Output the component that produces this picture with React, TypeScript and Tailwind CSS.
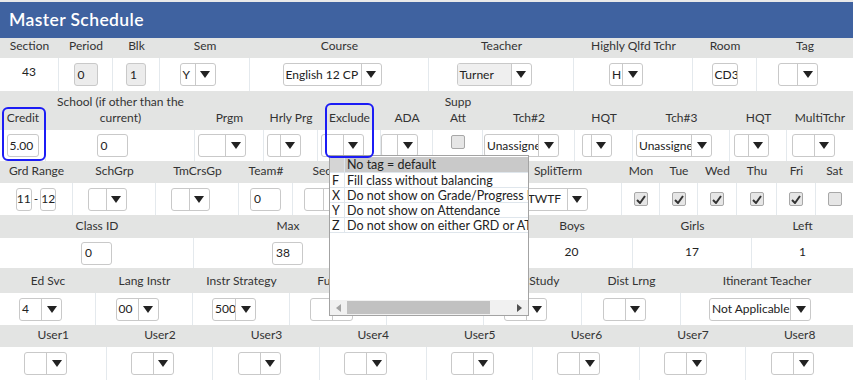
import React from "react";

const font = { fontFamily: "Lato, 'Liberation Sans', sans-serif" };

function Arrow() {
  return (
    <svg width="10" height="7" viewBox="0 0 10 7">
      <polygon points="0,0 10,0 5,7" fill="#222" />
    </svg>
  );
}

function Sel({ w, v = "", gray = false }: { w: string; v?: string; gray?: boolean }) {
  return (
    <div className={`${w} mr-[14px] flex h-[23px] overflow-hidden rounded-[3px] border border-[#c9c9c9] bg-white`}>
      <div className={`flex min-w-0 flex-1 items-center overflow-hidden whitespace-nowrap pl-[2px] text-[12px] text-[#222] ${gray ? "bg-[#efefef]" : ""}`}>
        {v}
      </div>
      <div className="flex w-[20px] shrink-0 items-center justify-center border-l border-[#c9c9c9]">
        <Arrow />
      </div>
    </div>
  );
}

function Inp({ w, v, gray = false, pad = "px-[3px]" }: { w: string; v: string; gray?: boolean; pad?: string }) {
  return (
    <div className={`${w} ${pad} flex h-[23px] items-center overflow-hidden whitespace-nowrap rounded-[3px] border border-[#c9c9c9] text-[12px] text-[#222] ${gray ? "bg-[#ececec]" : "bg-white"}`}>
      {v}
    </div>
  );
}

function Check({ on = false }: { on?: boolean }) {
  return (
    <div className="flex h-[14px] w-[14px] items-center justify-center rounded-[2px] border border-[#a8a8a8] bg-[#e6e6e6]">
      {on && (
        <svg width="10" height="9" viewBox="0 0 10 9">
          <path d="M1 5 L4 8 L9 1" stroke="#333" strokeWidth="2" fill="none" />
        </svg>
      )}
    </div>
  );
}

type Cell = { label: React.ReactNode; value?: React.ReactNode; top?: boolean };

function Band({ grid, head, body, cells }: { grid: string; head: string; body: string; cells: Cell[] }) {
  return (
    <>
      <div className={`grid ${grid} ${head} bg-[#e3e4e3]`}>
        {cells.map((c, i) => (
          <div key={i} className="flex items-end justify-center whitespace-nowrap pb-[4px] text-center text-[12px] leading-[16px] text-[#333]">
            {c.label}
          </div>
        ))}
      </div>
      <div className={`grid ${grid} ${body} bg-white`}>
        {cells.map((c, i) => (
          <div
            key={i}
            className={`flex justify-center border-r border-[#e4e9ed] text-[12px] text-[#222] last:border-r-0 ${c.top ? "items-start pt-[5px]" : "items-center"}`}
          >
            {c.value}
          </div>
        ))}
      </div>
    </>
  );
}

const tags = [
  ["F", "Fill class without balancing"],
  ["X", "Do not show on Grade/Progress Reports"],
  ["Y", "Do not show on Attendance"],
  ["Z", "Do not show on either GRD or ATT"],
];

export default function App() {
  return (
    <div className="relative h-[380px] w-[853px] overflow-hidden bg-white" style={font}>
      <div className="flex h-[38px] items-center border-t-2 border-[#e9e9e9] bg-[#3f62a0] pl-[9px] text-[17.5px] font-semibold tracking-[0.4px] text-white">
        Master Schedule
      </div>

      <Band
        grid="grid-cols-[59px_54px_47px_90px_179px_145px_119px_64px_96px]"
        head="h-[20px]"
        body="h-[33px]"
        cells={[
          { label: "Section", value: "43", top: true },
          { label: "Period", value: <Inp w="w-[24px]" v="0" gray /> },
          { label: "Blk", value: <Inp w="w-[20px]" v="1" gray /> },
          { label: "Sem", value: <Sel w="w-[36px]" v="Y" /> },
          { label: "Course", value: <Sel w="w-[99px]" v="English 12 CP" /> },
          { label: "Teacher", value: <Sel w="w-[75px]" v="Turner" gray /> },
          { label: "Highly Qlfd Tchr", value: <Sel w="w-[34px]" v="H" /> },
          { label: "Room", value: <Inp w="w-[26px]" v="CD3" pad="px-[2px]" /> },
          { label: "Tag", value: <Sel w="w-[40px]" /> },
        ]}
      />

      <Band
        grid="grid-cols-[46px_149px_69px_54px_63px_52px_50px_92px_58px_97px_57px_66px]"
        head="h-[39px]"
        body="h-[31px]"
        cells={[
          { label: "Credit", value: <Inp w="w-[32px]" v="5.00" pad="px-[2px]" /> },
          {
            label: (
              <span>
                School (if other than the
                <br />
                current)
              </span>
            ),
            value: (
              <div className="mr-[16px]">
                <Inp w="w-[31px]" v="0" />
              </div>
            ),
          },
          { label: "Prgm", value: <Sel w="w-[48px]" /> },
          { label: "Hrly Prg", value: <Sel w="w-[34px]" /> },
          { label: "Exclude", value: <Sel w="w-[43px]" /> },
          { label: "ADA", value: <Sel w="w-[40px]" /> },
          {
            label: (
              <span>
                Supp
                <br />
                Att
              </span>
            ),
            value: <Check />,
            top: true,
          },
          { label: "Tch#2", value: <Sel w="w-[75px]" v="Unassigned" /> },
          { label: "HQT", value: <Sel w="w-[30px]" /> },
          { label: "Tch#3", value: <Sel w="w-[76px]" v="Unassigned" /> },
          { label: "HQT", value: <Sel w="w-[35px]" /> },
          { label: "MultiTchr", value: <Sel w="w-[43px]" /> },
        ]}
      />

      <Band
        grid="grid-cols-[73px_83px_83px_54px_77px_124px_128px_38px_38px_39px_40px_39px_37px]"
        head="h-[22px]"
        body="h-[32px]"
        cells={[
          {
            label: "Grd Range",
            value: (
              <div className="flex items-center gap-[2px]">
                <Inp w="w-[16px]" v="11" pad="justify-center" />
                <span>-</span>
                <Inp w="w-[16px]" v="12" pad="justify-center" />
              </div>
            ),
          },
          { label: "SchGrp", value: <Sel w="w-[39px]" /> },
          { label: "TmCrsGp", value: <Sel w="w-[39px]" /> },
          { label: "Team#", value: <Inp w="w-[31px]" v="0" /> },
          { label: "SecGrp", value: <Sel w="w-[40px]" /> },
          { label: "" },
          { label: "SplitTerm", value: <Sel w="w-[74px]" v="MTWTF" /> },
          { label: "Mon", value: <Check on /> },
          { label: "Tue", value: <Check on /> },
          { label: "Wed", value: <Check on /> },
          { label: "Thu", value: <Check on /> },
          { label: "Fri", value: <Check on /> },
          { label: "Sat", value: <Check /> },
        ]}
      />

      <Band
        grid="grid-cols-[194px_188px_129px_122px_119px_101px]"
        head="h-[23px]"
        body="h-[30px]"
        cells={[
          { label: "Class ID", value: <Inp w="w-[31px]" v="0" /> },
          { label: "Max", value: <Inp w="w-[31px]" v="38" /> },
          { label: "" },
          { label: "Boys", value: "20", top: true },
          { label: "Girls", value: "17", top: true },
          { label: "Left", value: "1", top: true },
        ]}
      />

      <Band
        grid="grid-cols-[96px_97px_97px_97px_97px_98px_99px_172px]"
        head="h-[25px]"
        body="h-[32px]"
        cells={[
          { label: "Ed Svc", value: <Sel w="w-[43px]" v="4" /> },
          { label: "Lang Instr", value: <Sel w="w-[43px]" v="00" /> },
          { label: "Instr Strategy", value: <Sel w="w-[44px]" v="500" /> },
          { label: "Funding", value: <Sel w="w-[43px]" /> },
          { label: "" },
          { label: "Ind. Study", value: <Sel w="w-[43px]" /> },
          { label: "Dist Lrng", value: <Sel w="w-[43px]" /> },
          { label: "Itinerant Teacher", value: <Sel w="w-[102px]" v="Not Applicable" /> },
        ]}
      />

      <Band
        grid="grid-cols-8"
        head="h-[22px]"
        body="h-[33px]"
        cells={["User1", "User2", "User3", "User4", "User5", "User6", "User7", "User8"].map((u) => ({
          label: u,
          value: <Sel w="w-[43px]" />,
        }))}
      />

      {/* tag dropdown */}
      <div className="absolute left-[329px] top-[155px] flex h-[161px] w-[200px] flex-col border border-[#a3a3a3] bg-white text-[12.5px] text-[#222]">
        <div className="flex-1 overflow-hidden pt-[1px]">
          <div className="flex h-[16px] border-b border-[#dfe6ec]">
            <div className="w-[15px] shrink-0 border-r border-[#dfe6ec] bg-[#d5d5d5]" />
            <div className="flex-1 whitespace-nowrap bg-[#c9c9c9] pl-[2px] leading-[16px]">No tag = default</div>
          </div>
          {tags.map(([k, t]) => (
            <div key={k} className="flex h-[15px] border-b border-[#dfe6ec] leading-[15px]">
              <div className="w-[15px] shrink-0 border-r border-[#dfe6ec] pl-[2px]">{k}</div>
              <div className="flex-1 overflow-hidden whitespace-nowrap pl-[2px]">{t}</div>
            </div>
          ))}
        </div>
        <div className="flex h-[15px] items-center bg-[#f1f1f1]">
          <div className="flex w-[17px] justify-center">
            <svg width="5" height="8" viewBox="0 0 5 8">
              <polygon points="5,0 5,8 0,4" fill="#a3a3a3" />
            </svg>
          </div>
          <div className="h-[13px] w-[143px] bg-[#c1c1c1]" />
          <div className="flex-1" />
          <div className="flex w-[17px] justify-center">
            <svg width="5" height="8" viewBox="0 0 5 8">
              <polygon points="0,0 0,8 5,4" fill="#505050" />
            </svg>
          </div>
        </div>
      </div>

      {/* highlight boxes */}
      <div className="absolute left-[2px] top-[107px] h-[54px] w-[44px] rounded-[6px] border-2 border-[#1c1cf5]" />
      <div className="absolute left-[325px] top-[103px] h-[55px] w-[49px] rounded-[6px] border-2 border-[#1c1cf5]" />
    </div>
  );
}
